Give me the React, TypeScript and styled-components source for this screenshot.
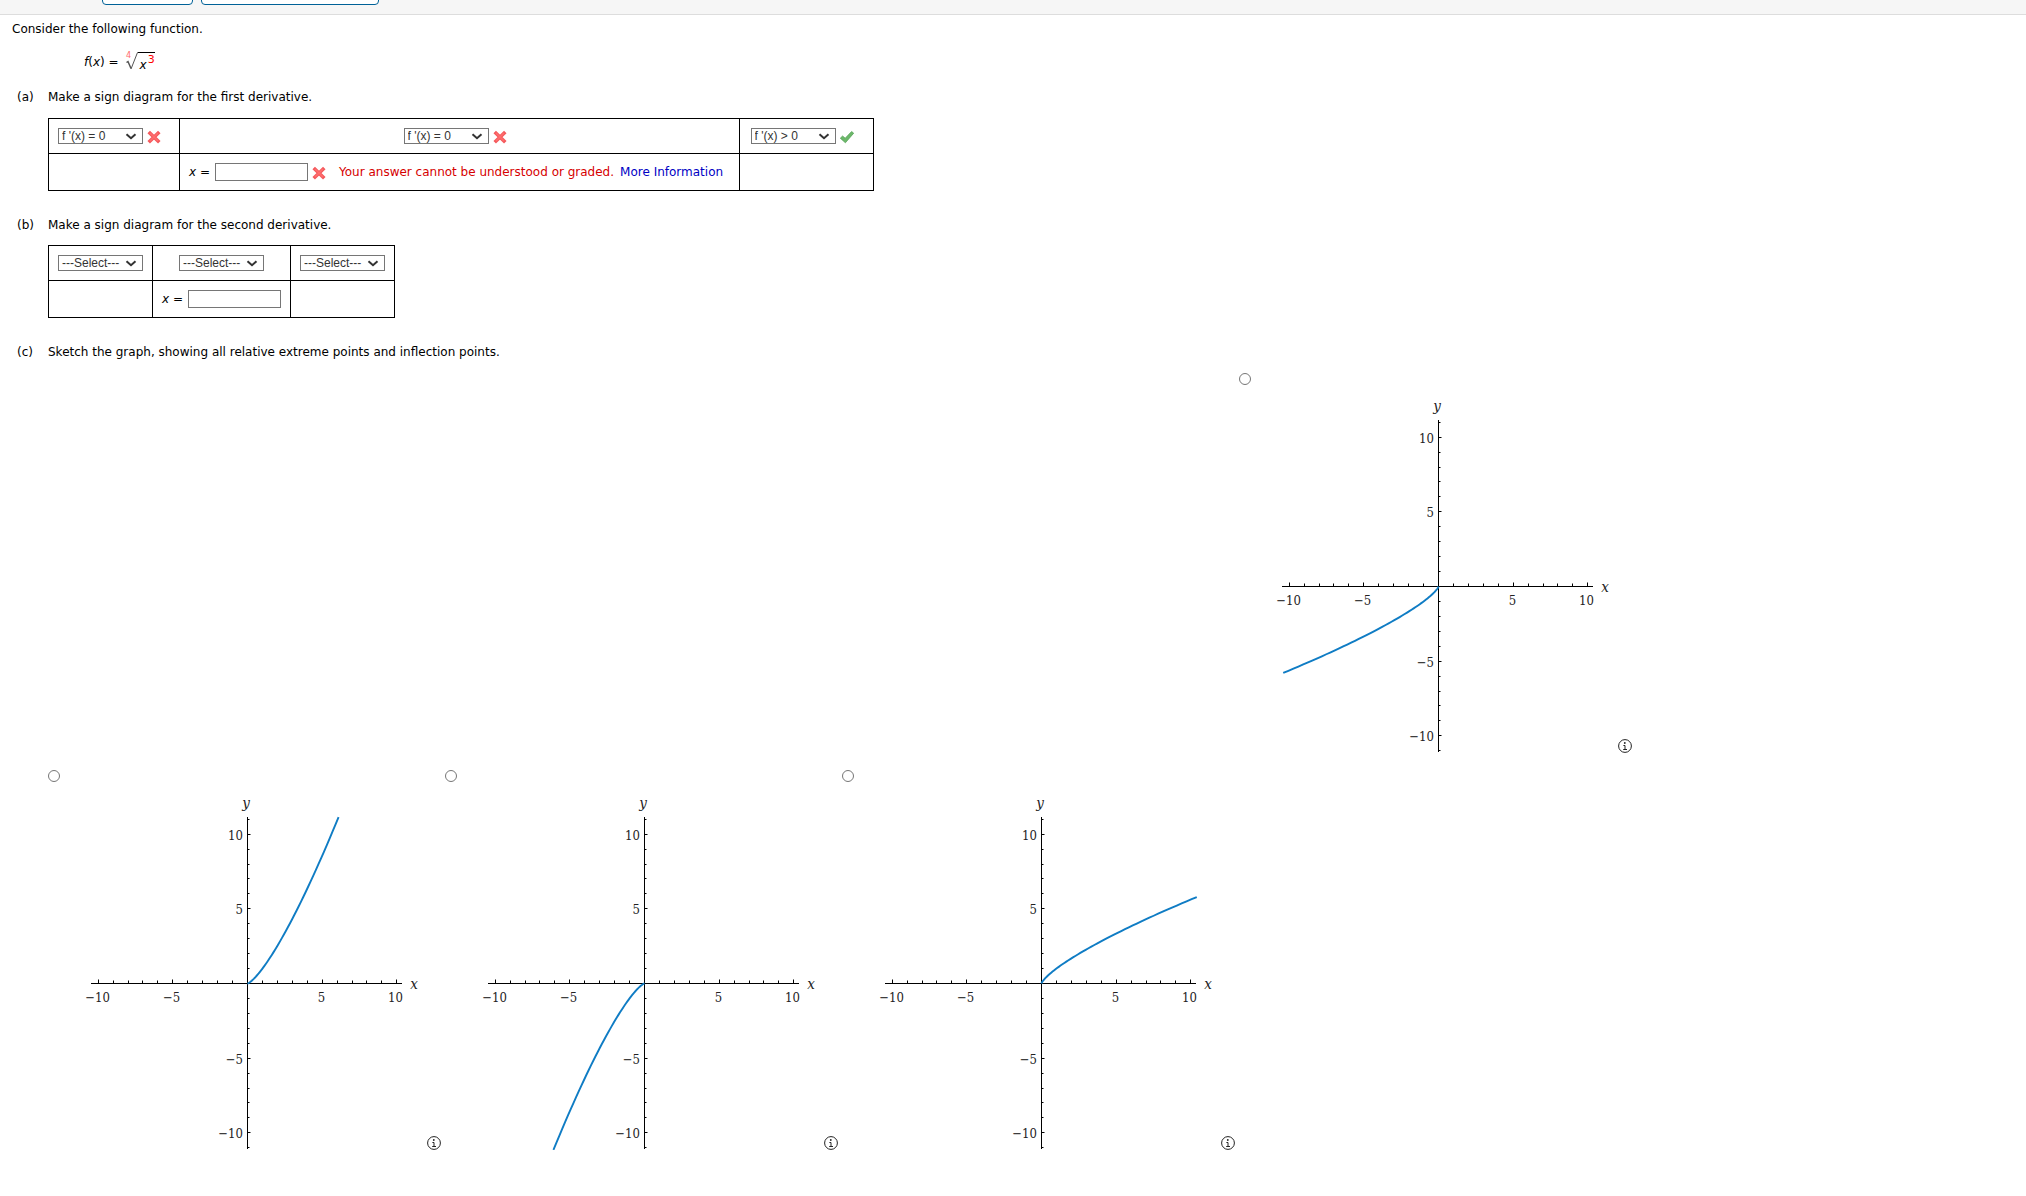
import React from "react";
import styled, { createGlobalStyle } from "styled-components";

const GlobalStyle = createGlobalStyle`
  *, *::before, *::after { box-sizing: border-box; }
  body {
    margin: 0;
    background: #fff;
    color: #000;
    font: 12px/16px Verdana, "DejaVu Sans", sans-serif;
  }
`;

const Toolbar = styled.header`
  display: flex;
  align-items: flex-end;
  gap: 8px;
  height: 15px;
  padding: 0 102px 9px;
  overflow: hidden;
  background: #f6f6f6;
  border-bottom: 1px solid #ddd;
`;

const ToolButton = styled.button<{ $width: number }>`
  flex: none;
  width: ${(p) => p.$width}px;
  height: 32px;
  padding: 0;
  background: #fff;
  border: 1px solid #006298;
  border-radius: 4px;
`;

const Page = styled.main`
  padding: 6px 12px 32px;
`;

const Intro = styled.p`
  margin: 0;
`;

const Formula = styled.div`
  display: flex;
  align-items: flex-end;
  height: 18px;
  margin: 15px 0 19px 72px;
`;

const Lead = styled.span`
  margin-right: 7px;
`;

const Radical = styled.span`
  display: flex;
  height: 18px;
`;

const Surd = styled.svg`
  display: block;
  width: 12px;
  height: 18px;
  overflow: visible;
`;

const Radicand = styled.span`
  display: flex;
  height: 18px;
  padding: 4px 0 0 2px;
  border-top: 1px solid #000;
  line-height: 16px;
`;

const Exponent = styled.sup`
  height: 12px;
  margin: -3px 0 0 1px;
  color: #f00;
  font-size: 11px;
  line-height: 12px;
`;

const Parts = styled.ol`
  display: grid;
  gap: 26px;
  margin: 0;
  padding: 0 0 0 5px;
  list-style: none;
`;

const Part = styled.li`
  display: grid;
  grid-template-columns: 31px 1fr;
`;

const PartBody = styled.div<{ $gap?: number }>`
  display: grid;
  justify-items: start;
  gap: ${(p) => p.$gap ?? 13}px;
`;

const Prompt = styled.p`
  margin: 0;
`;

const SignTable = styled.table`
  border-collapse: collapse;
`;

const Cell = styled.td<{ $width?: number }>`
  min-width: ${(p) => (p.$width ? `${p.$width}px` : "0")};
  padding: 9px;
  border: 1px solid #000;
`;

const CellRow = styled.div<{ $align?: string }>`
  display: flex;
  align-items: center;
  justify-content: ${(p) => p.$align ?? "center"};
  white-space: nowrap;
`;

const SelectBox = styled.span`
  position: relative;
  display: block;
  width: 85px;
  height: 16px;
`;

const Select = styled.select`
  appearance: none;
  display: block;
  width: 85px;
  height: 16px;
  margin: 0;
  padding: 0 0 0 3px;
  background: #fff;
  border: 1px solid #767676;
  border-radius: 0;
  color: #333;
  font: 12px/14px Arial, "Liberation Sans", sans-serif;
`;

const Chevron = styled.svg`
  position: absolute;
  top: 5px;
  right: 6px;
  width: 12px;
  height: 7px;
  pointer-events: none;
`;

const Mark = styled.svg`
  display: block;
  flex: none;
  width: 14px;
  height: 14px;
  margin: 2px 9px 0 4px;
`;

const AnswerLabel = styled.label`
  display: flex;
  align-items: center;
  gap: 5px;
`;

const Answer = styled.input`
  width: 93px;
  height: 18px;
  margin: 0;
  padding: 1px 3px;
  background: #fff;
  border: 1px solid #767676;
  font: 12px Arial, "Liberation Sans", sans-serif;
`;

const ErrorText = styled.span`
  margin: 0 6px 0 4px;
  color: #d60000;
`;

const InfoLink = styled.a`
  color: #0000c4;
  text-decoration: none;
`;

const Options = styled.div`
  display: grid;
  grid-template-columns: repeat(4, 397px);
  row-gap: 17px;
`;

const Option = styled.div<{ $column: number }>`
  grid-column: ${(p) => p.$column};
  display: flex;
  align-items: flex-start;
`;

const Radio = styled.input`
  appearance: none;
  flex: none;
  width: 12px;
  height: 12px;
  margin: 0;
  border: 1px solid #767676;
  border-radius: 50%;
  background: #fff;
`;

const Plot = styled.svg`
  display: block;
  flex: none;
  width: 367px;
  height: 380px;
  fill: #222;
  font: 13px "DejaVu Serif Condensed", "DejaVu Serif", serif;
`;

const InfoButton = styled.button`
  align-self: flex-end;
  width: 14px;
  height: 14px;
  padding: 0;
  background: none;
  border: 0;
`;

const InfoIcon = styled.svg`
  display: block;
  width: 14px;
  height: 14px;
`;

function SignSelect({ name, value }: { name: string; value: string }) {
  const choices = ["---Select---", "f '(x) > 0", "f '(x) = 0", "f '(x) < 0"];
  return (
    <SelectBox>
      <Select aria-label={name} defaultValue={value}>
        {choices.map((c) => (
          <option key={c}>{c}</option>
        ))}
      </Select>
      <Chevron viewBox="0 0 12 7" aria-hidden="true">
        <path d="M1.5 1.2 6 5.2l4.5-4" fill="none" stroke="#333" strokeWidth="2" />
      </Chevron>
    </SelectBox>
  );
}

function Wrong() {
  return (
    <Mark viewBox="0 0 14 14" role="img" aria-label="Incorrect">
      <path d="M3 3.2 11 11M11 3.2 3 11" stroke="#f4595c" strokeWidth="3.6" strokeLinecap="square" />
      <path d="M3 3 11 11M11 3 3 11" stroke="#ff6e6e" strokeWidth="1.6" />
    </Mark>
  );
}

function Right() {
  return (
    <Mark viewBox="0 0 14 14" role="img" aria-label="Correct">
      <path d="M0.3 8.200 2.6 6 5.2 8.200 11.6 1.5 13.7 3.200 5.4 12.8Z" fill="#6cb86a" stroke="#4f9e50" strokeWidth="0.7" />
    </Mark>
  );
}

const UNIT = 14.93;
const CX = 187.5;
const CY = 213.5;
const TICKS = Array.from({ length: 23 }, (_, i) => i - 11).filter((n) => n !== 0);
const LABELS = [-10, -5, 5, 10];

type Curve = { power: number; sign: 1 | -1; limit: number };

function curvePath({ power, sign, limit }: Curve) {
  const steps = 60;
  return Array.from({ length: steps + 1 }, (_, i) => {
    const x = limit * (i / steps) ** 2;
    const y = x ** power;
    return `${i ? "L" : "M"}${(CX + sign * x * UNIT).toFixed(2)} ${(CY - sign * y * UNIT).toFixed(2)}`;
  }).join("");
}

const format = (n: number) => String(n).replace("-", "−");

function Graph({ name, curve }: { name: string; curve: Curve }) {
  const at = (n: number) => Math.round(n * UNIT);
  return (
    <Plot viewBox="0 0 367 380" role="img" aria-label={name}>
      <g stroke="#000" strokeWidth="1">
        <path d={`M31 ${CY}H342M${CX} 47V379`} />
        {TICKS.filter((n) => Math.abs(n) < 11).map((n) => (
          <path key={n} d={`M${CX + at(n)} ${CY}v${n % 5 ? -3 : -4}`} />
        ))}
        {TICKS.map((n) => (
          <path key={n} d={`M${CX} ${CY - at(n)}h${n % 5 ? 2 : 3}`} />
        ))}
      </g>
      <path d={curvePath(curve)} fill="none" stroke="#0f7cc4" strokeWidth="1.9" />
      {LABELS.map((n) => (
        <text key={n} x={CX + at(n) - 1} y="232" textAnchor="middle">
          {format(n)}
        </text>
      ))}
      {LABELS.map((n) => (
        <text key={n} x="183" y={CY - at(n) + 5} textAnchor="end">
          {format(n)}
        </text>
      ))}
      <text x="186" y="38" textAnchor="middle" fontSize="15" fontStyle="italic">y</text>
      <text x="354" y="219" textAnchor="middle" fontSize="15" fontStyle="italic">x</text>
    </Plot>
  );
}

const GRAPHS: { column: number; name: string; curve: Curve }[] = [
  { column: 4, name: "Graph 1", curve: { power: 0.75, sign: -1, limit: 10.4 } },
  { column: 1, name: "Graph 2", curve: { power: 4 / 3, sign: 1, limit: 6.1 } },
  { column: 2, name: "Graph 3", curve: { power: 4 / 3, sign: -1, limit: 6.1 } },
  { column: 3, name: "Graph 4", curve: { power: 0.75, sign: 1, limit: 10.4 } },
];

export default function App() {
  return (
    <>
      <GlobalStyle />
      <Toolbar>
        <ToolButton $width={91} aria-label="My notes" />
        <ToolButton $width={178} aria-label="Ask your teacher" />
      </Toolbar>
      <Page>
        <Intro>Consider the following function.</Intro>
        <Formula>
          <Lead>
            <i>f</i>(<i>x</i>) =
          </Lead>
          <Radical>
            <Surd viewBox="0 0 12 18" aria-hidden="true">
              <path d="M0.5 10.5 2 9.5 5 16.5" fill="none" stroke="#555" strokeWidth="1.5" />
              <path d="M5 17 11.5 0.5H12" fill="none" stroke="#555" strokeWidth="1" />
              <text x="0" y="6" fontSize="8" fill="#ff6a6a">4</text>
            </Surd>
            <Radicand>
              <i>x</i>
              <Exponent>3</Exponent>
            </Radicand>
          </Radical>
        </Formula>
        <Parts>
          <Part>
            <span>(a)</span>
            <PartBody>
              <Prompt>Make a sign diagram for the first derivative.</Prompt>
              <SignTable>
                <tbody>
                  <tr>
                    <Cell>
                      <CellRow>
                        <SignSelect name="First derivative, left interval" value="f '(x) = 0" />
                        <Wrong />
                      </CellRow>
                    </Cell>
                    <Cell $width={560}>
                      <CellRow>
                        <SignSelect name="First derivative, critical value" value="f '(x) = 0" />
                        <Wrong />
                      </CellRow>
                    </Cell>
                    <Cell $width={134}>
                      <CellRow>
                        <SignSelect name="First derivative, right interval" value="f '(x) > 0" />
                        <Right />
                      </CellRow>
                    </Cell>
                  </tr>
                  <tr>
                    <Cell />
                    <Cell>
                      <CellRow $align="flex-start">
                        <AnswerLabel>
                          <span><i>x</i> =</span>
                          <Answer type="text" />
                        </AnswerLabel>
                        <Wrong />
                        <ErrorText>Your answer cannot be understood or graded.</ErrorText>
                        <InfoLink href="#more">More Information</InfoLink>
                      </CellRow>
                    </Cell>
                    <Cell />
                  </tr>
                </tbody>
              </SignTable>
            </PartBody>
          </Part>
          <Part>
            <span>(b)</span>
            <PartBody $gap={12}>
              <Prompt>Make a sign diagram for the second derivative.</Prompt>
              <SignTable>
                <tbody>
                  <tr>
                    {["left interval", "critical value", "right interval"].map((place) => (
                      <Cell key={place}>
                        <CellRow>
                          <SignSelect name={`Second derivative, ${place}`} value="---Select---" />
                        </CellRow>
                      </Cell>
                    ))}
                  </tr>
                  <tr>
                    <Cell />
                    <Cell>
                      <CellRow>
                        <AnswerLabel>
                          <span><i>x</i> =</span>
                          <Answer type="text" />
                        </AnswerLabel>
                      </CellRow>
                    </Cell>
                    <Cell />
                  </tr>
                </tbody>
              </SignTable>
            </PartBody>
          </Part>
          <Part>
            <span>(c)</span>
            <PartBody>
              <Prompt>Sketch the graph, showing all relative extreme points and inflection points.</Prompt>
              <Options role="radiogroup" aria-label="Graph of the function">
                {GRAPHS.map((g) => (
                  <Option key={g.name} $column={g.column}>
                    <Radio type="radio" name="graph" aria-label={g.name} />
                    <Graph name={g.name} curve={g.curve} />
                    <InfoButton aria-label={`About ${g.name}`}>
                      <InfoIcon viewBox="0 0 14 14" aria-hidden="true">
                        <circle cx="7" cy="7" r="6.4" fill="none" stroke="#222" strokeWidth="1" />
                        <circle cx="6.8" cy="4" r="0.9" fill="#222" />
                        <path d="M5.4 6.5H7V10.500M5.200 10.500H9" fill="none" stroke="#222" strokeWidth="1" />
                      </InfoIcon>
                    </InfoButton>
                  </Option>
                ))}
              </Options>
            </PartBody>
          </Part>
        </Parts>
      </Page>
    </>
  );
}
